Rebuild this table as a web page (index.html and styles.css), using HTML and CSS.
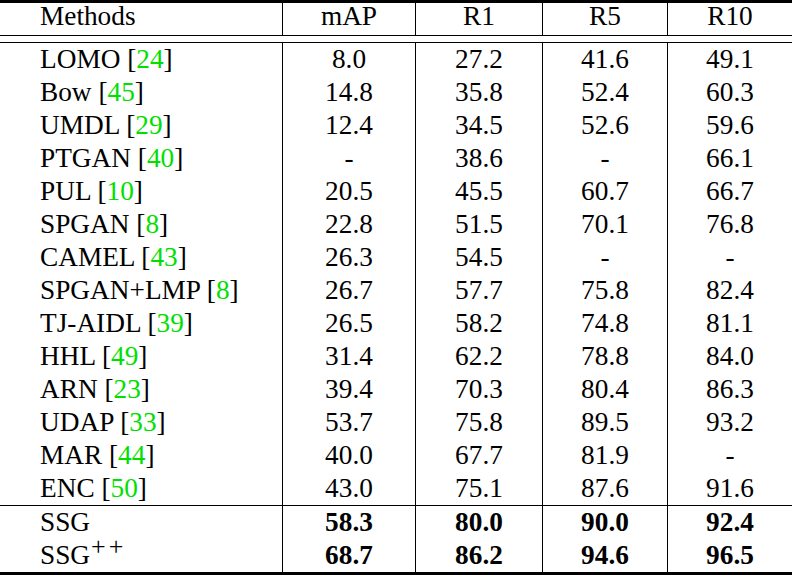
FILE: index.html
```html
<!DOCTYPE html>
<html lang="en">
<head>
    <meta charset="UTF-8">
    <meta name="viewport" content="width=device-width, initial-scale=1.0">
    <title>Comparison with state-of-the-art methods</title>
    <link rel="stylesheet" href="styles.css">
</head>
<body>
    <table class="results">
        <colgroup>
            <col class="col-method">
            <col class="col-map">
            <col class="col-r1">
            <col class="col-r5">
            <col class="col-r10">
        </colgroup>
        <thead>
            <tr class="head-row">
                <th class="method">Methods</th>
                <th>mAP</th>
                <th>R1</th>
                <th>R5</th>
                <th>R10</th>
            </tr>
            <tr class="gap-row">
                <td colspan="5"></td>
            </tr>
        </thead>
        <tbody>
            <tr>
                <td class="method">LOMO [<span class="cite">24</span>]</td>
                <td>8.0</td><td>27.2</td><td>41.6</td><td>49.1</td>
            </tr>
            <tr>
                <td class="method">Bow [<span class="cite">45</span>]</td>
                <td>14.8</td><td>35.8</td><td>52.4</td><td>60.3</td>
            </tr>
            <tr>
                <td class="method">UMDL [<span class="cite">29</span>]</td>
                <td>12.4</td><td>34.5</td><td>52.6</td><td>59.6</td>
            </tr>
            <tr>
                <td class="method">PTGAN [<span class="cite">40</span>]</td>
                <td>-</td><td>38.6</td><td>-</td><td>66.1</td>
            </tr>
            <tr>
                <td class="method">PUL [<span class="cite">10</span>]</td>
                <td>20.5</td><td>45.5</td><td>60.7</td><td>66.7</td>
            </tr>
            <tr>
                <td class="method">SPGAN [<span class="cite">8</span>]</td>
                <td>22.8</td><td>51.5</td><td>70.1</td><td>76.8</td>
            </tr>
            <tr>
                <td class="method">CAMEL [<span class="cite">43</span>]</td>
                <td>26.3</td><td>54.5</td><td>-</td><td>-</td>
            </tr>
            <tr>
                <td class="method">SPGAN+LMP [<span class="cite">8</span>]</td>
                <td>26.7</td><td>57.7</td><td>75.8</td><td>82.4</td>
            </tr>
            <tr>
                <td class="method">TJ-AIDL [<span class="cite">39</span>]</td>
                <td>26.5</td><td>58.2</td><td>74.8</td><td>81.1</td>
            </tr>
            <tr>
                <td class="method">HHL [<span class="cite">49</span>]</td>
                <td>31.4</td><td>62.2</td><td>78.8</td><td>84.0</td>
            </tr>
            <tr>
                <td class="method">ARN [<span class="cite">23</span>]</td>
                <td>39.4</td><td>70.3</td><td>80.4</td><td>86.3</td>
            </tr>
            <tr>
                <td class="method">UDAP [<span class="cite">33</span>]</td>
                <td>53.7</td><td>75.8</td><td>89.5</td><td>93.2</td>
            </tr>
            <tr>
                <td class="method">MAR [<span class="cite">44</span>]</td>
                <td>40.0</td><td>67.7</td><td>81.9</td><td>-</td>
            </tr>
            <tr>
                <td class="method">ENC [<span class="cite">50</span>]</td>
                <td>43.0</td><td>75.1</td><td>87.6</td><td>91.6</td>
            </tr>
        </tbody>
        <tbody class="ours">
            <tr>
                <td class="method">SSG</td>
                <td>58.3</td><td>80.0</td><td>90.0</td><td>92.4</td>
            </tr>
            <tr>
                <td class="method">SSG<sup>++</sup></td>
                <td>68.7</td><td>86.2</td><td>94.6</td><td>96.5</td>
            </tr>
        </tbody>
    </table>
</body>
</html>
```

FILE: styles.css
```css
body {
    margin: 0;
    padding: 0;
    background-color: #fff;
    font-family: "Liberation Serif", "Times New Roman", serif;
    font-size: 27.3px;
    color: #000;
}
.results {
    width: 792px;
    table-layout: fixed;
    border-collapse: separate;
    border-spacing: 0;
    border-top: 3px solid #000;
    border-bottom: 3px solid #000;
}
.col-method {
    width: 282px;
}
.col-map {
    width: 133px;
}
.col-r1 {
    width: 127px;
}
.col-r5,
.col-r10 {
    width: 125px;
}
th, td {
    padding: 0;
    text-align: center;
    font-weight: normal;
    border-left: 1px solid #000;
    white-space: nowrap;
}
th.method, td.method {
    text-align: left;
    padding-left: 40px;
    border-left: none;
}
.head-row th {
    line-height: 27px;
    padding-bottom: 5px;
    border-bottom: 1px solid #000;
}
.gap-row td {
    height: 6px;
    line-height: 0;
    border-left: none;
    border-bottom: 1px solid #000;
}
tbody td {
    line-height: 33px;
}
.ours tr:first-child td {
    border-top: 1px solid #000;
}
.ours td {
    font-weight: bold;
}
.ours td.method {
    font-weight: normal;
}
.cite {
    color: #00e000;
}
sup {
    font-size: 0.95em;
    line-height: 0;
    vertical-align: 0.36em;
    letter-spacing: 3px;
    margin-left: 1px;
}
```
